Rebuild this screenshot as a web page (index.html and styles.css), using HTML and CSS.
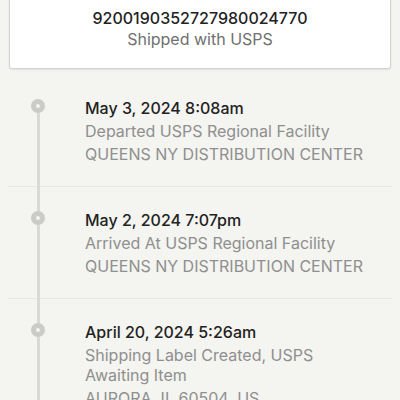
FILE: index.html
```html
<!DOCTYPE html>
<html lang="en">

<head>
    <meta charset="UTF-8" />
    <title>Tracking</title>
    <link rel="stylesheet" href="styles.css">
</head>

<body>
    <!-- Tracking card -->
    <div class="tracking-card">
        <div class="tracking-number">9200190352727980024770</div>
        <div class="carrier">Shipped with USPS</div>
    </div>

    <!-- Timeline -->
    <div class="timeline">
        <div class="event first">
            <div class="rail"><span class="dot"></span></div>
            <div class="info">
                <div class="date">May 3, 2024 8:08am</div>
                <div class="status">Departed USPS Regional Facility</div>
                <div class="place">QUEENS NY DISTRIBUTION CENTER</div>
            </div>
        </div>
        <div class="event">
            <div class="rail"><span class="dot"></span></div>
            <div class="info">
                <div class="date">May 2, 2024 7:07pm</div>
                <div class="status">Arrived At USPS Regional Facility</div>
                <div class="place">QUEENS NY DISTRIBUTION CENTER</div>
            </div>
        </div>
        <div class="event">
            <div class="rail"><span class="dot"></span></div>
            <div class="info">
                <div class="date">April 20, 2024 5:26am</div>
                <div class="status">Shipping Label Created, USPS Awaiting Item</div>
                <div class="place">AURORA, IL 60504, US</div>
            </div>
        </div>
    </div>
</body>

</html>
```

FILE: styles.css
```css
* {
    box-sizing: border-box;
}

body {
    margin: 0;
    background: #f4f4f0;
    color: #222;
    font-family: Inter, "Noto Sans", sans-serif;
    font-size: 16px;
}

.tracking-card {
    margin: 0 9px;
    padding: 7px 0 19px;
    background: #fff;
    border: 1px solid #d2d2ce;
    border-top: none;
    border-radius: 0 0 3px 3px;
    box-shadow: 0 1px 2px rgba(0, 0, 0, 0.08);
    text-align: center;
}

.tracking-number {
    font-weight: 500;
    line-height: 22px;
}

.carrier {
    color: #707070;
    line-height: 20px;
}

.timeline {
    margin-top: 6px;
}

.event {
    display: flex;
    margin: 0 8px;
    border-bottom: 1px solid #e6e6e2;
}

.rail {
    position: relative;
    width: 77px;
    flex-shrink: 0;
    padding: 24px 0 0 23px;
}

.rail::before {
    content: "";
    position: absolute;
    left: 29px;
    top: 0;
    bottom: -1px;
    width: 3px;
    background: #d9d9d5;
}

.first .rail::before {
    top: 30px;
}

.dot {
    display: block;
    position: relative;
    width: 14px;
    height: 14px;
    border: 5px solid #cbcbc7;
    border-radius: 50%;
    background: #f4f4f0;
}

.info {
    flex: 1;
    padding: 23px 10px 22px 0;
}

.date {
    font-weight: 500;
    line-height: 20px;
}

.status,
.place {
    margin-top: 3px;
    color: #8f8f8f;
    line-height: 20px;
}
```
